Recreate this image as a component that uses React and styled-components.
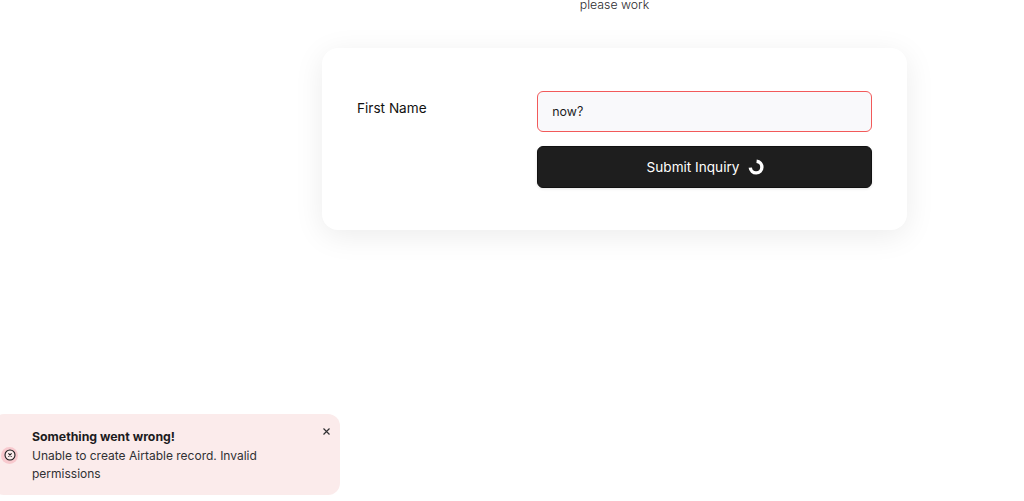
import React from "react";
import styled, { createGlobalStyle } from "styled-components";

const Global = createGlobalStyle`
  html, body { margin: 0; padding: 0; background: #fff; }
  body { font-family: Inter, "Liberation Sans", sans-serif; overflow: hidden; }
`;

const Page = styled.main`
  width: 1024px;
  height: 501px;
  box-sizing: border-box;
  padding: 0 117px 0 322px;
  display: flex;
  flex-direction: column;
  overflow: hidden;
`;

const Subtitle = styled.p`
  margin: -3px 0 0;
  height: 51px;
  font-size: 12.3px;
  line-height: 16px;
  font-weight: 300;
  color: #2c2c2e;
  text-align: center;
`;

const Card = styled.form`
  box-sizing: border-box;
  width: 585px;
  height: 182px;
  padding: 43px 35px 0 35px;
  display: grid;
  grid-template-columns: 180.3px 1fr;
  grid-auto-rows: min-content;
  row-gap: 14px;
  background: #fff;
  border-radius: 16px;
  box-shadow: 0 6px 30px rgba(0, 0, 0, 0.08);
`;

const Label = styled.label`
  font-size: 13.6px;
  line-height: 20px;
  font-weight: 400;
  color: #111;
  padding-top: 7px;
`;

const Input = styled.input`
  box-sizing: border-box;
  width: 334.4px;
  height: 41px;
  padding: 0 14px;
  font: 400 12.4px Inter, "Liberation Sans", sans-serif;
  color: #1c1c1e;
  background: #f9f9fb;
  border: 1px solid #f25a5a;
  border-radius: 6px;
  outline: none;
`;

const Button = styled.button`
  grid-column: 2;
  box-sizing: border-box;
  width: 334.4px;
  height: 42px;
  display: flex;
  align-items: center;
  justify-content: center;
  gap: 9px;
  padding: 0 0 0 2px;
  font: 400 13.6px Inter, "Liberation Sans", sans-serif;
  color: #fff;
  background: #1e1e1e;
  border: 1px solid #111;
  border-radius: 6px;
  box-shadow: 0 1px 3px rgba(0, 0, 0, 0.1);
`;

const Toast = styled.div`
  position: fixed;
  left: -8px;
  bottom: 6px;
  box-sizing: border-box;
  width: 347.5px;
  height: 81px;
  padding: 14px 38px 0 40px;
  background: #fbebeb;
  border-radius: 12px;
  font-size: 12px;
  line-height: 18.5px;
  color: #303033;
`;

const ToastTitle = styled.div`
  font-weight: 700;
  font-size: 12.3px;
  color: #1c1c1e;
`;

const ToastIcon = styled.span`
  position: absolute;
  left: 9px;
  top: 32.5px;
  width: 17px;
  height: 17px;
  border-radius: 50%;
  background: #f8c9ce;
  display: flex;
  align-items: center;
  justify-content: center;
`;

const Close = styled.span`
  position: absolute;
  right: 9px;
  top: 13px;
  display: flex;
`;

const Spinner = () => (
  <svg width="16" height="16" viewBox="0 0 16 16" fill="none">
    <path d="M8.6 2.3 A5.8 5.8 0 1 1 2.3 8.6" stroke="#fff" strokeWidth="3.4" />
  </svg>
);

export default function App() {
  return (
    <>
      <Global />
      <Page>
        <Subtitle>please work</Subtitle>
        <Card onSubmit={(e) => e.preventDefault()}>
          <Label htmlFor="first">First Name</Label>
          <Input id="first" defaultValue="now?" />
          <Button type="button">
            Submit Inquiry <Spinner />
          </Button>
        </Card>
      </Page>
      <Toast role="alert">
        <ToastIcon>
          <svg width="12" height="12" viewBox="0 0 12 12" fill="#fbebeb" stroke="#1c1c1e">
            <circle cx="6" cy="6" r="5" strokeWidth="1.1" />
            <path d="M4.4 4.4l3.2 3.2M7.6 4.4l-3.2 3.2" strokeWidth="1.1" />
          </svg>
        </ToastIcon>
        <ToastTitle>Something went wrong!</ToastTitle>
        Unable to create Airtable record. Invalid permissions
        <Close>
          <svg width="9" height="9" viewBox="0 0 9 9" fill="none" stroke="#303033" strokeWidth="1.2">
            <path d="M1.5 1.5l6 6M7.5 1.5l-6 6" />
          </svg>
        </Close>
      </Toast>
    </>
  );
}
